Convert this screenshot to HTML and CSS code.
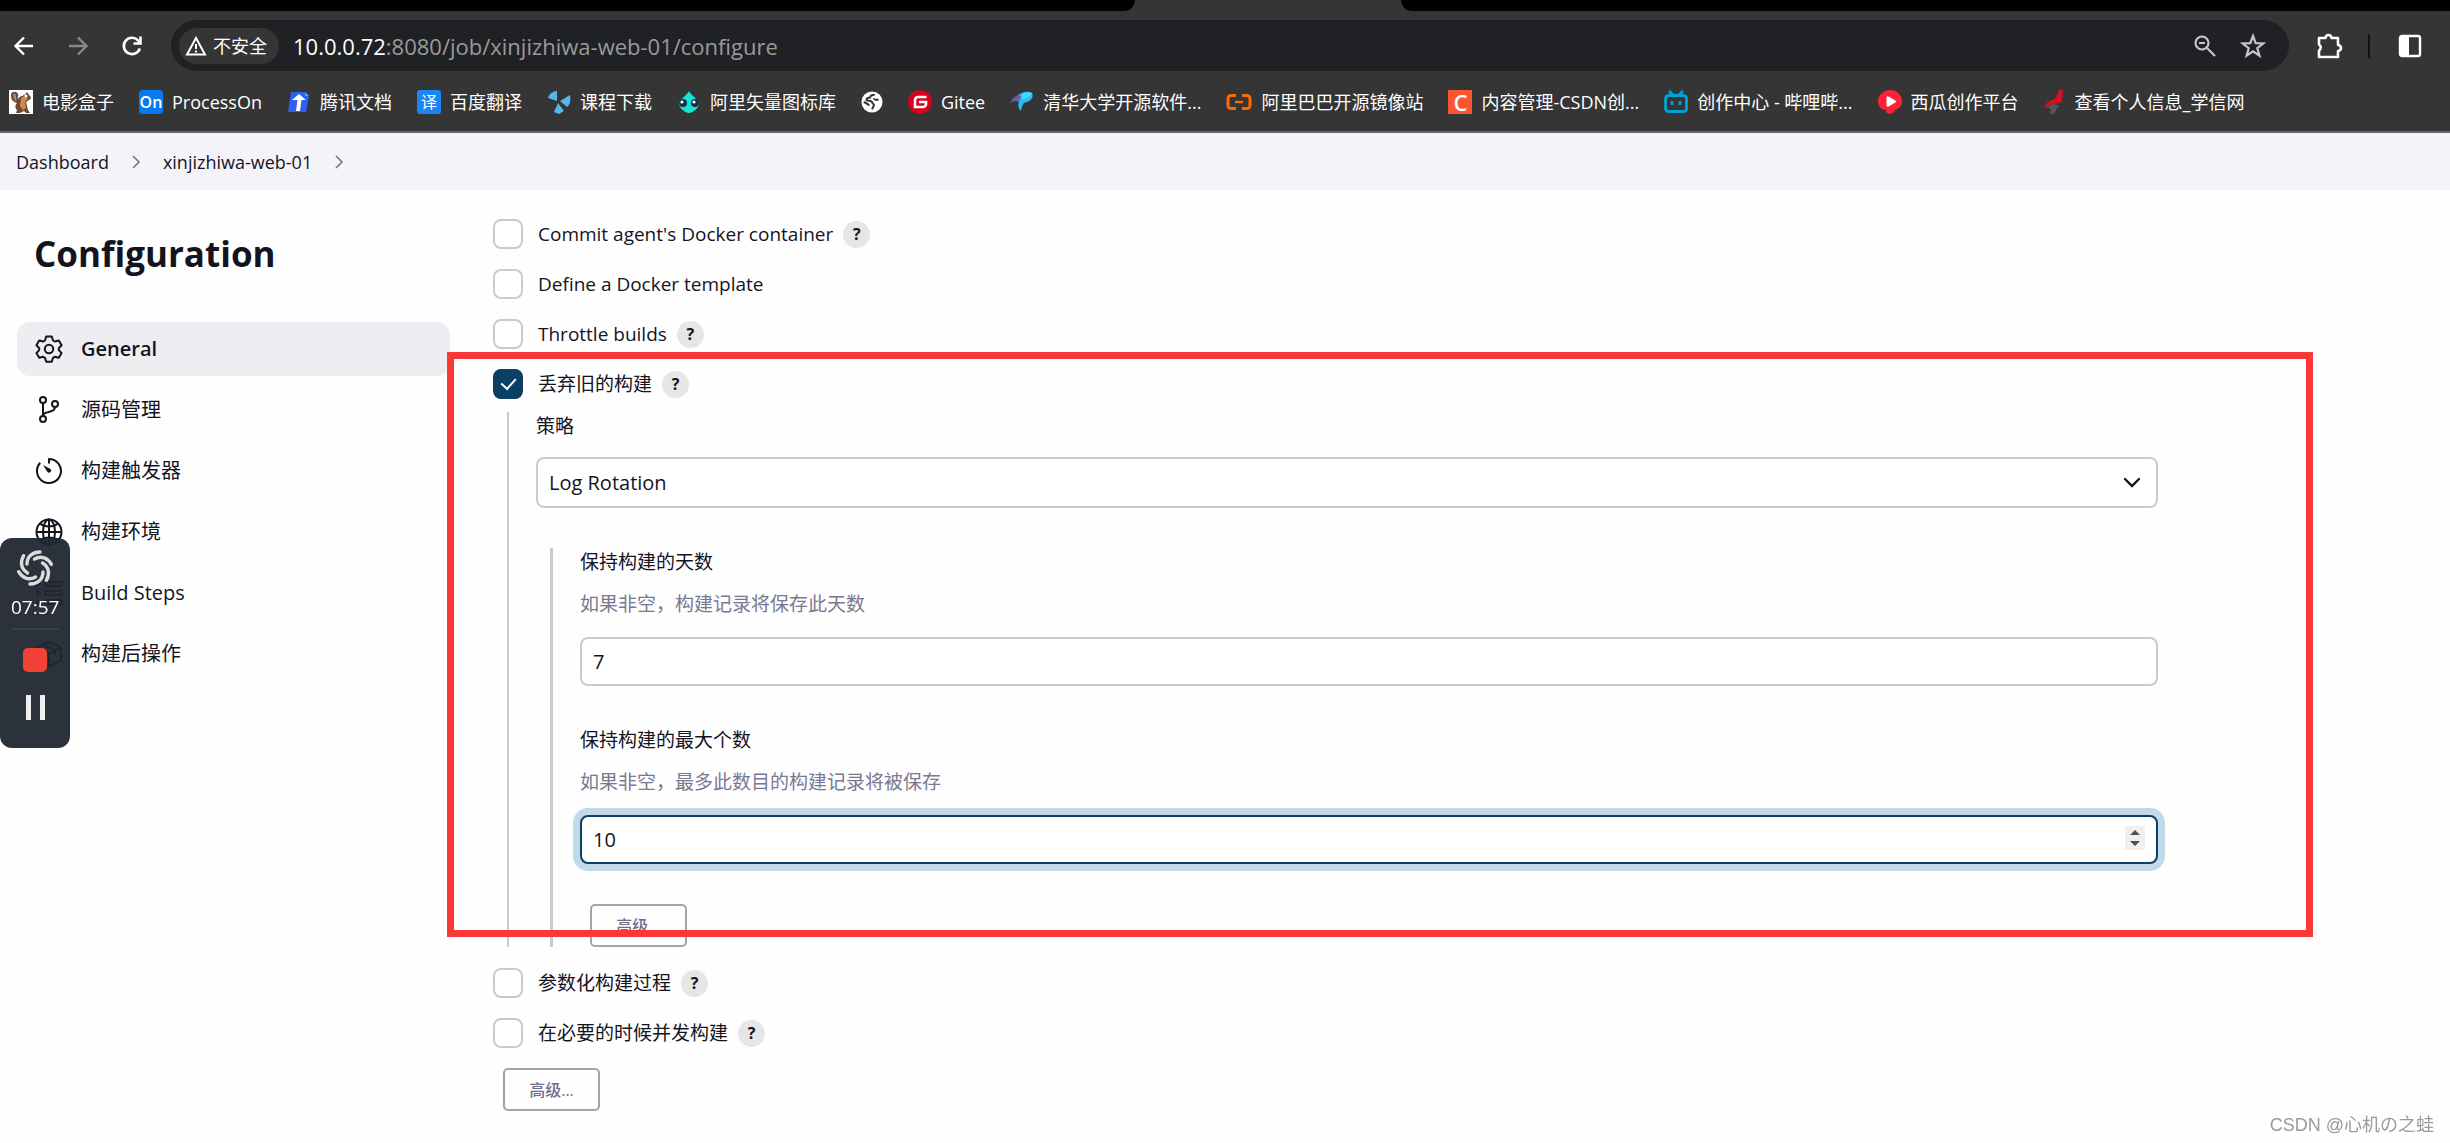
FILE: index.html
```html
<!DOCTYPE html>
<html lang="zh-CN">
<head>
    <meta charset="UTF-8">
    <title>xinjizhiwa-web-01 Config [Jenkins]</title>
    <meta name="viewport" content="width=device-width, initial-scale=1.0">
    <link rel="stylesheet" href="styles.css">
</head>
<body>
    <header class="browser">
        <div class="tabs">
            <div class="tabs-left"></div>
            <div class="tabs-right"></div>
        </div>
        <div class="toolbar">
            <button class="tool" aria-label="后退">
                <svg width="22" height="22" viewBox="0 0 22 22" fill="none" stroke="#fff" stroke-width="2.4"><path d="M20 11H3M11 2.500L2.500 11l8.500 8.500"/></svg>
            </button>
            <button class="tool" aria-label="前进">
                <svg width="22" height="22" viewBox="0 0 22 22" fill="none" stroke="#888" stroke-width="2.4"><path d="M2 11h17M11 2.500l8.500 8.500-8.500 8.500"/></svg>
            </button>
            <button class="tool" aria-label="刷新">
                <svg width="22" height="22" viewBox="0 0 22 22" fill="none" stroke="#fff" stroke-width="2.600"><path d="M18.800 13.500A8.200 8.200 0 1 1 17 5.300l2 2.200"/><path d="M19.500 1.500v7h-7" /></svg>
            </button>
            <div class="address">
                <button class="chip">
                    <svg width="22" height="20" viewBox="0 0 22 20" fill="none" stroke="#fff" stroke-width="2"><path d="M11 2L20 18.500H2z"/><path d="M11 8v5M11 14.500v2"/></svg>
                    不安全
                </button>
                <span class="url"><b>10.0.0.72</b>:8080/job/xinjizhiwa-web-01/configure</span>
                <button class="tool" aria-label="缩放">
                    <svg width="24" height="24" viewBox="0 0 24 24" fill="none" stroke="#c7c7c7" stroke-width="2.200"><circle cx="9" cy="9" r="6.500"/><path d="M14 14l8 8M6 9h6"/></svg>
                </button>
                <button class="tool" aria-label="收藏">
                    <svg width="26" height="26" viewBox="0 0 26 26" fill="none" stroke="#c7c7c7" stroke-width="2.200"><path d="M13 3l2.700 7.200 7.600.3-6 4.700 2.100 7.400-6.400-4.300-6.400 4.300 2.100-7.400-6-4.700 7.600-.3z"/></svg>
                </button>
            </div>
            <button class="tool" aria-label="扩展程序">
                <svg width="28" height="28" viewBox="0 0 28 28" fill="none" stroke="#fff" stroke-width="2.600" stroke-linejoin="round"><path d="M4 6h6.500a3 3 0 0 1 6 0H23v7a3 3 0 0 1 0 6v6H4v-6.500a3.500 3.500 0 0 0 0-6z"/></svg>
            </button>
            <span class="divider"></span>
            <button class="tool" aria-label="侧边栏">
                <svg width="24" height="24" viewBox="0 0 24 24"><rect x="2" y="2" width="20" height="20" rx="2" fill="none" stroke="#fff" stroke-width="2.400"/><path d="M2 2h9v20H2z" fill="#fff"/></svg>
            </button>
        </div>
        <nav class="bookmarks">
            <a href="#">
                <svg width="24" height="24" viewBox="0 0 24 24"><path d="M0 0h24v24H0z" fill="#fff"/><path d="M2 5c0-4 6-4 7-1 1 2-1 3 0 5 2-4 6-2 9-7l2 3c2 2 3 4 0 5l-3 2 2 8 2 3h-4l-2-2-4 2H7l1-3c-3-3-1-6 0-7-4-1-6-3-6-8z" fill="#6b4a35"/><path d="M12 8l5-3 2 3-3 4 1 6-3 2-3-4z" fill="#d28a4c"/><circle cx="17" cy="6" r="1.400" fill="#fff"/><path d="M4 4c2-1 3 0 3 2s1 4 0 6C5 9 4 7 4 4z" fill="#a48874"/></svg>
                电影盒子
            </a>
            <a href="#"><span class="tile tile-on">On</span>ProcessOn</a>
            <a href="#">
                <svg width="24" height="24" viewBox="0 0 24 24"><path d="M4 2h14l4 4-3 16H1z" fill="#2d5ff5"/><path d="M18 2l4 4h-4z" fill="#18c3ea"/><path d="M12 4l7 6h-4.500l-1.500 11H9l1.500-11H5z" fill="#fff"/></svg>
                腾讯文档
            </a>
            <a href="#"><span class="tile tile-yi">译</span>百度翻译</a>
            <a href="#">
                <svg width="24" height="24" viewBox="0 0 24 24" fill="#55b7ea"><path d="M10 1v10L1 8C2 4 6 1 10 1zM13 11l10-6c1 5 0 10-3 12zM11 13l6 8-5 3-5-2z"/></svg>
                课程下载
            </a>
            <a href="#">
                <svg width="24" height="24" viewBox="0 0 24 24"><path d="M12 1c1 3 8 8 10 11s-5 11-10 11S0 15 2 12 11 4 12 1z" fill="#12e5d4"/><circle cx="6" cy="13" r="4" fill="#17303d"/><circle cx="18" cy="13" r="4" fill="#17303d"/><circle cx="5" cy="12" r="1.600" fill="#fff"/><circle cx="17" cy="12" r="1.600" fill="#fff"/></svg>
                阿里矢量图标库
            </a>
            <a href="#" aria-label="网站">
                <svg width="22" height="22" viewBox="0 0 24 24"><circle cx="12" cy="12" r="11.500" fill="#fff"/><path d="M15 4c-4 0-5 1-5 3-3 0-4 1-4 3 2 1 5 0 6 2 0 2 3 2 2 4l-2 4M3 12c2 1 5 2 6 4M14 8c1 2 4 2 5 1" fill="none" stroke="#353535" stroke-width="2.200"/></svg>
            </a>
            <a href="#">
                <svg width="24" height="24" viewBox="0 0 24 24"><circle cx="12" cy="12" r="12" fill="#d9001b"/><path d="M18.500 7H10a3 3 0 0 0-3 3v7h8a3 3 0 0 0 3-3v-2h-7" fill="none" stroke="#fff" stroke-width="2.600"/></svg>
                Gitee
            </a>
            <a href="#">
                <svg width="24" height="24" viewBox="0 0 24 24"><path d="M5 10C8 3 16 0 22 3c2 4-1 8-5 9-4 0-5 4-6 9-3-3-3-6-2-9z" fill="#25bdf5"/><path d="M0 13c3-6 7-9 11-7L9 12c-3-2-6-1-9 1z" fill="#695ca9"/><path d="M12 4c4-2 8-2 10-1-2 4-5 6-10 6z" fill="#45d8fa"/></svg>
                清华大学开源软件...
            </a>
            <a href="#">
                <svg width="26" height="24" viewBox="0 0 26 24" fill="none" stroke="#ff6a00" stroke-width="3"><path d="M10 5.500H5a3 3 0 0 0-3 3v7a3 3 0 0 0 3 3h5M16 5.500h5a3 3 0 0 1 3 3v7a3 3 0 0 1-3 3h-5"/><path d="M9 12h8" stroke-width="2.400"/></svg>
                阿里巴巴开源镜像站
            </a>
            <a href="#"><span class="tile tile-csdn">C</span>内容管理-CSDN创...</a>
            <a href="#">
                <svg width="24" height="24" viewBox="0 0 24 24" fill="none" stroke="#00a1d6" stroke-width="2.800"><rect x="1.500" y="5.500" width="21" height="16" rx="3"/><path d="M5 1l4 4M19 1l-4 4M8 11v4M16 11v4"/></svg>
                创作中心 - 哔哩哔...
            </a>
            <a href="#">
                <svg width="24" height="24" viewBox="0 0 24 24"><path d="M12 0c7 0 12 5 12 11s-4 8-7 9c-1 4-9 6-9 0C3 20 0 16 0 11S5 0 12 0z" fill="#ff2135"/><path d="M8.500 8c0-2 1-2 3-1l5 3c2 1 2 2 0 3l-5 3c-2 1-3 1-3-1z" fill="#fff"/></svg>
                西瓜创作平台
            </a>
            <a href="#">
                <svg width="22" height="24" viewBox="0 0 22 24"><path d="M15 0h4c-1 4 0 7-1 10-1 4-5 3-8 4-4 0-7 3-9 5 0-5 3-8 7-9 5-1 5-6 7-10z" fill="#d8101e"/><path d="M3 17l6-3 7 2c-3 1-4 3-5 7l-5 1 1-5z" fill="#55585b"/></svg>
                查看个人信息_学信网
            </a>
        </nav>
    </header>

    <nav class="breadcrumbs">
        <a href="#">Dashboard</a>
        <svg width="10" height="14" viewBox="0 0 10 14" fill="none" stroke="#75757d" stroke-width="1.600"><path d="M2 1l6 6-6 6"/></svg>
        <a href="#">xinjizhiwa-web-01</a>
        <svg width="10" height="14" viewBox="0 0 10 14" fill="none" stroke="#75757d" stroke-width="1.600"><path d="M2 1l6 6-6 6"/></svg>
    </nav>

    <div class="page">
        <aside class="side">
            <h1>Configuration</h1>
            <nav class="tasks">
                <a class="task active" href="#">
                    <svg width="28" height="28" viewBox="0 0 28 28"><path d="M11.200 1.500h5.600l1.200 4 1.800 1 4-1 2.800 4.700-2.800 3v1.900l2.800 3-2.800 4.700-4-1-1.800 1-1.200 4h-5.600l-1.200-4-1.800-1-4 1-2.800-4.700 2.800-3v-1.900l-2.800-3 2.800-4.700 4 1 1.800-1z"/><circle cx="14" cy="14" r="4.200"/></svg>
                    General
                </a>
                <a class="task" href="#">
                    <svg width="28" height="28" viewBox="0 0 28 28"><circle cx="8" cy="4" r="3"/><circle cx="20" cy="8" r="3"/><circle cx="8" cy="23" r="3"/><path d="M8 7v13M20 11c0 7-12 3-12 9"/></svg>
                    源码管理
                </a>
                <a class="task" href="#">
                    <svg width="28" height="28" viewBox="0 0 28 28"><path d="M14 6.500V2a12 12 0 1 1-8.800 3.800"/><path class="solid" d="M8 8l7.500 4a2 2 0 1 1-3 3z"/></svg>
                    构建触发器
                </a>
                <a class="task" href="#">
                    <svg width="28" height="28" viewBox="0 0 28 28"><circle cx="14" cy="14" r="12.500"/><ellipse cx="14" cy="14" rx="6" ry="12.500"/><path d="M14 1.500v25M1.500 14h25M5 5.500c5 4 13 4 18 0M5 22.500c5-4 13-4 18 0"/></svg>
                    构建环境
                </a>
                <a class="task" href="#">
                    <svg width="28" height="28" viewBox="0 0 28 28"><rect x="10" y="3" width="17" height="4" rx="2"/><rect x="10" y="12" width="17" height="4" rx="2"/><rect x="10" y="21" width="17" height="4" rx="2"/><path d="M2 3l3 2-3 2zM2 12l3 2-3 2zM2 21l3 2-3 2z"/></svg>
                    Build Steps
                </a>
                <a class="task" href="#">
                    <svg width="28" height="28" viewBox="0 0 28 28"><path d="M14 1.500l12 6v13l-12 6-12-6v-13zM2 7.500l12 6 12-6M14 13.500v13M8 4.500l12 6v5"/></svg>
                    构建后操作
                </a>
            </nav>
        </aside>

        <main class="config">
            <div class="option">
                <input type="checkbox" id="commit">
                <label for="commit">Commit agent's Docker container</label>
                <button class="help">?</button>
            </div>
            <div class="option">
                <input type="checkbox" id="template">
                <label for="template">Define a Docker template</label>
            </div>
            <div class="option">
                <input type="checkbox" id="throttle">
                <label for="throttle">Throttle builds</label>
                <button class="help">?</button>
            </div>
            <section class="discard">
                <div class="option">
                    <input type="checkbox" id="discard" checked>
                    <label for="discard">丢弃旧的构建</label>
                    <button class="help">?</button>
                </div>
                <div class="nested">
                    <label class="field-label" for="strategy">策略</label>
                    <div class="select">
                        <select id="strategy">
                            <option>Log Rotation</option>
                        </select>
                        <svg width="18" height="12" viewBox="0 0 18 12" fill="none" stroke="#14141f" stroke-width="2.400" stroke-linecap="round"><path d="M2 2l7 7 7-7"/></svg>
                    </div>
                    <div class="rotation">
                        <div class="field">
                            <label class="field-label" for="days">保持构建的天数</label>
                            <div class="field-help">如果非空，构建记录将保存此天数</div>
                            <input type="number" id="days" value="7">
                        </div>
                        <div class="field">
                            <label class="field-label" for="builds">保持构建的最大个数</label>
                            <div class="field-help">如果非空，最多此数目的构建记录将被保存</div>
                            <input class="focused" type="number" id="builds" value="10">
                        </div>
                        <button class="advanced">高级...</button>
                    </div>
                </div>
                <div class="highlight"></div>
            </section>
            <div class="option">
                <input type="checkbox" id="params">
                <label for="params">参数化构建过程</label>
                <button class="help">?</button>
            </div>
            <div class="option">
                <input type="checkbox" id="concurrent">
                <label for="concurrent">在必要的时候并发构建</label>
                <button class="help">?</button>
            </div>
            <button class="advanced">高级...</button>
        </main>
    </div>

    <!-- 录屏悬浮条 -->
    <div class="recorder">
        <svg width="38" height="38" viewBox="-19 -19 38 38" fill="none" stroke="#dcdcdc" stroke-width="3.400" stroke-linecap="round">
            <path id="blade" d="M-8-4C-8-12-2-16 5-16"/>
            <use href="#blade" transform="rotate(60)"/>
            <use href="#blade" transform="rotate(120)"/>
            <use href="#blade" transform="rotate(180)"/>
            <use href="#blade" transform="rotate(240)"/>
            <use href="#blade" transform="rotate(300)"/>
        </svg>
        <span class="time">07:57</span>
        <button class="stop" aria-label="停止"></button>
        <button class="pause" aria-label="暂停"></button>
    </div>

    <div class="watermark">CSDN @心机の之蛙</div>
</body>
</html>
```
FILE: styles.css
```css
* {
    box-sizing: border-box;
}

body {
    margin: 0;
    background: #fefefe;
    color: #14141f;
    font-family: "Open Sans", "Noto Sans CJK SC", sans-serif;
    font-size: 19px;
    line-height: 28px;
}

a {
    color: inherit;
    text-decoration: none;
}

button {
    border: none;
    padding: 0;
    background: none;
    color: inherit;
    font: inherit;
}

svg {
    display: block;
    flex: none;
}

/* 浏览器 */
.browser {
    background: #353535;
    color: #fff;
    border-bottom: 2px solid #666;
}

.tabs {
    display: flex;
    justify-content: space-between;
    gap: 266px;
    height: 11px;
}

.tabs-left,
.tabs-right {
    background: #000;
}

.tabs-left {
    flex: 1135;
    border-bottom-right-radius: 11px;
}

.tabs-right {
    flex: 1049;
    border-bottom-left-radius: 11px;
}

.toolbar {
    display: flex;
    align-items: center;
    padding: 9px 28px 9px 13px;
}

.toolbar > .tool {
    margin-right: 32px;
}

.address {
    flex: 1;
    display: flex;
    align-items: center;
    gap: 23px;
    height: 51px;
    padding: 0 23px 0 8px;
    margin-left: -4px;
    margin-right: 26px;
    border-radius: 26px;
    background: #202124;
}

.chip {
    display: flex;
    align-items: center;
    gap: 6px;
    height: 36px;
    padding: 0 12px 0 6px;
    margin-right: -9px;
    border-radius: 18px;
    background: #353535;
    font-size: 18px;
}

.url {
    flex: 1;
    color: #9a9a9a;
    font-size: 22px;
}

.url b {
    color: #fff;
    font-weight: 400;
}

.divider {
    width: 2px;
    height: 24px;
    margin-left: -7px;
    margin-right: 28px;
    background: #111;
}

.toolbar > .tool:last-child {
    margin-right: 0;
}

.bookmarks {
    display: flex;
    align-items: center;
    gap: 25px;
    height: 51px;
    padding: 0 9px 8px;
    font-size: 18px;
    white-space: nowrap;
}

.bookmarks a {
    display: flex;
    align-items: center;
    gap: 9px;
}

.tile {
    width: 24px;
    height: 24px;
    line-height: 24px;
    text-align: center;
    font-size: 16px;
}

.tile-on {
    border-radius: 4px;
    background: #067bef;
    font-weight: 600;
}

.tile-yi {
    border-radius: 3px;
    background: #1a86f5;
}

.tile-csdn {
    background: #fc5531;
    font-size: 22px;
    font-weight: 600;
}

/* 面包屑 */
.breadcrumbs {
    display: flex;
    align-items: center;
    gap: 22px;
    height: 57px;
    padding: 0 16px;
    background: #f4f3f9;
    font-size: 18px;
}

.page {
    display: flex;
}

.side {
    flex: none;
    width: 450px;
    padding: 40px 0 0 17px;
}

.side h1 {
    margin: 0 0 44px 17px;
    font-size: 35px;
    line-height: 48px;
}

.tasks {
    display: flex;
    flex-direction: column;
    gap: 7px;
    font-size: 20px;
}

.task {
    display: flex;
    align-items: center;
    gap: 18px;
    height: 54px;
    padding: 0 18px;
    border-radius: 13px;
}

.task.active {
    background: #eeedf2;
    font-weight: 600;
}

.task svg {
    fill: none;
    stroke: #14141f;
    stroke-width: 2;
    stroke-linejoin: round;
}

.task .solid {
    fill: #14141f;
    stroke: none;
}

/* 配置表单 */
.config {
    flex: 1;
    padding: 29px 292px 30px 43px;
}

.option {
    display: flex;
    align-items: center;
    height: 30px;
    margin-bottom: 20px;
}

.option input {
    appearance: none;
    display: grid;
    place-items: center;
    width: 30px;
    height: 30px;
    margin: 0 15px 0 0;
    border: 2px solid #c3cdd2;
    border-radius: 8px;
    background: #fff;
}

.option input:checked {
    border-color: #0b3f63;
    background: #0b3f63;
}

.option input:checked::before {
    content: "";
    width: 7px;
    height: 12px;
    margin-bottom: 4px;
    border: solid #fff;
    border-width: 0 2px 2px 0;
    transform: rotate(42deg);
}

.help {
    width: 27px;
    height: 27px;
    margin-left: 10px;
    border-radius: 50%;
    background: #e6e6e6;
    font-size: 16px;
    font-weight: 700;
    line-height: 27px;
}

.discard {
    position: relative;
    margin-bottom: 21px;
}

.discard .option {
    margin-bottom: 13px;
}

.nested {
    margin-left: 14px;
    padding-left: 27px;
    border-left: 2px solid #c3cdd2;
}

.field-label {
    display: block;
}

.select {
    position: relative;
    margin: 17px 0 40px;
}

.select svg {
    position: absolute;
    right: 17px;
    top: 20px;
    pointer-events: none;
}

.select select,
.field input {
    appearance: none;
    display: block;
    width: 100%;
    height: 49px;
    padding: 0 11px;
    border: 2px solid #c3cdd2;
    border-radius: 8px;
    background: #fff;
    color: inherit;
    font: inherit;
    font-size: 20px;
}

.select select {
    height: 51px;
}

.rotation {
    margin-left: 14px;
    padding-left: 27px;
    border-left: 3px solid #c3cdd2;
}

.field {
    margin-bottom: 40px;
}

.field-help {
    margin: 14px 0 19px;
    color: #7a7891;
}

.field input.focused {
    border-color: #0b3f63;
    box-shadow: 0 0 0 7px #c2d9e7;
}

.field input.focused::-webkit-inner-spin-button {
    appearance: none;
    width: 20px;
    height: 24px;
    opacity: 1;
    background: #f0f0f0 url("data:image/svg+xml,%3Csvg xmlns='http://www.w3.org/2000/svg' width='20' height='24' fill='%23505050'%3E%3Cpath d='M5 9l5-5 5 5zM5 15l5 5 5-5z'/%3E%3C/svg%3E") center no-repeat;
}

.advanced {
    display: block;
    width: 97px;
    height: 43px;
    margin-left: 10px;
    border: 2px solid #9ba7af;
    border-radius: 5px;
    color: #6f6d88;
    font-size: 16px;
    font-weight: 500;
}

.highlight {
    position: absolute;
    top: -17px;
    right: -155px;
    bottom: 10px;
    left: -46px;
    border: 7px solid #fb3838;
    pointer-events: none;
}

/* 录屏悬浮条 */
.recorder {
    position: fixed;
    top: 538px;
    left: 0;
    display: flex;
    flex-direction: column;
    align-items: center;
    width: 70px;
    height: 210px;
    padding-top: 11px;
    border-radius: 12px;
    background: rgba(32, 39, 49, 0.95);
    color: #fff;
}

.time {
    width: 48px;
    height: 43px;
    margin-bottom: 18px;
    padding-top: 6px;
    border-bottom: 2px solid #333f4d;
    text-align: center;
}

.stop {
    width: 24px;
    height: 24px;
    margin-bottom: 23px;
    border-radius: 5px;
    background: #f24236;
}

.pause {
    width: 19px;
    height: 25px;
    border: solid #eee;
    border-width: 0 5px;
}

.watermark {
    position: fixed;
    right: 16px;
    bottom: 4px;
    color: #999;
    font-family: "Liberation Sans", "Noto Sans CJK SC", sans-serif;
    font-size: 18px;
}
```
